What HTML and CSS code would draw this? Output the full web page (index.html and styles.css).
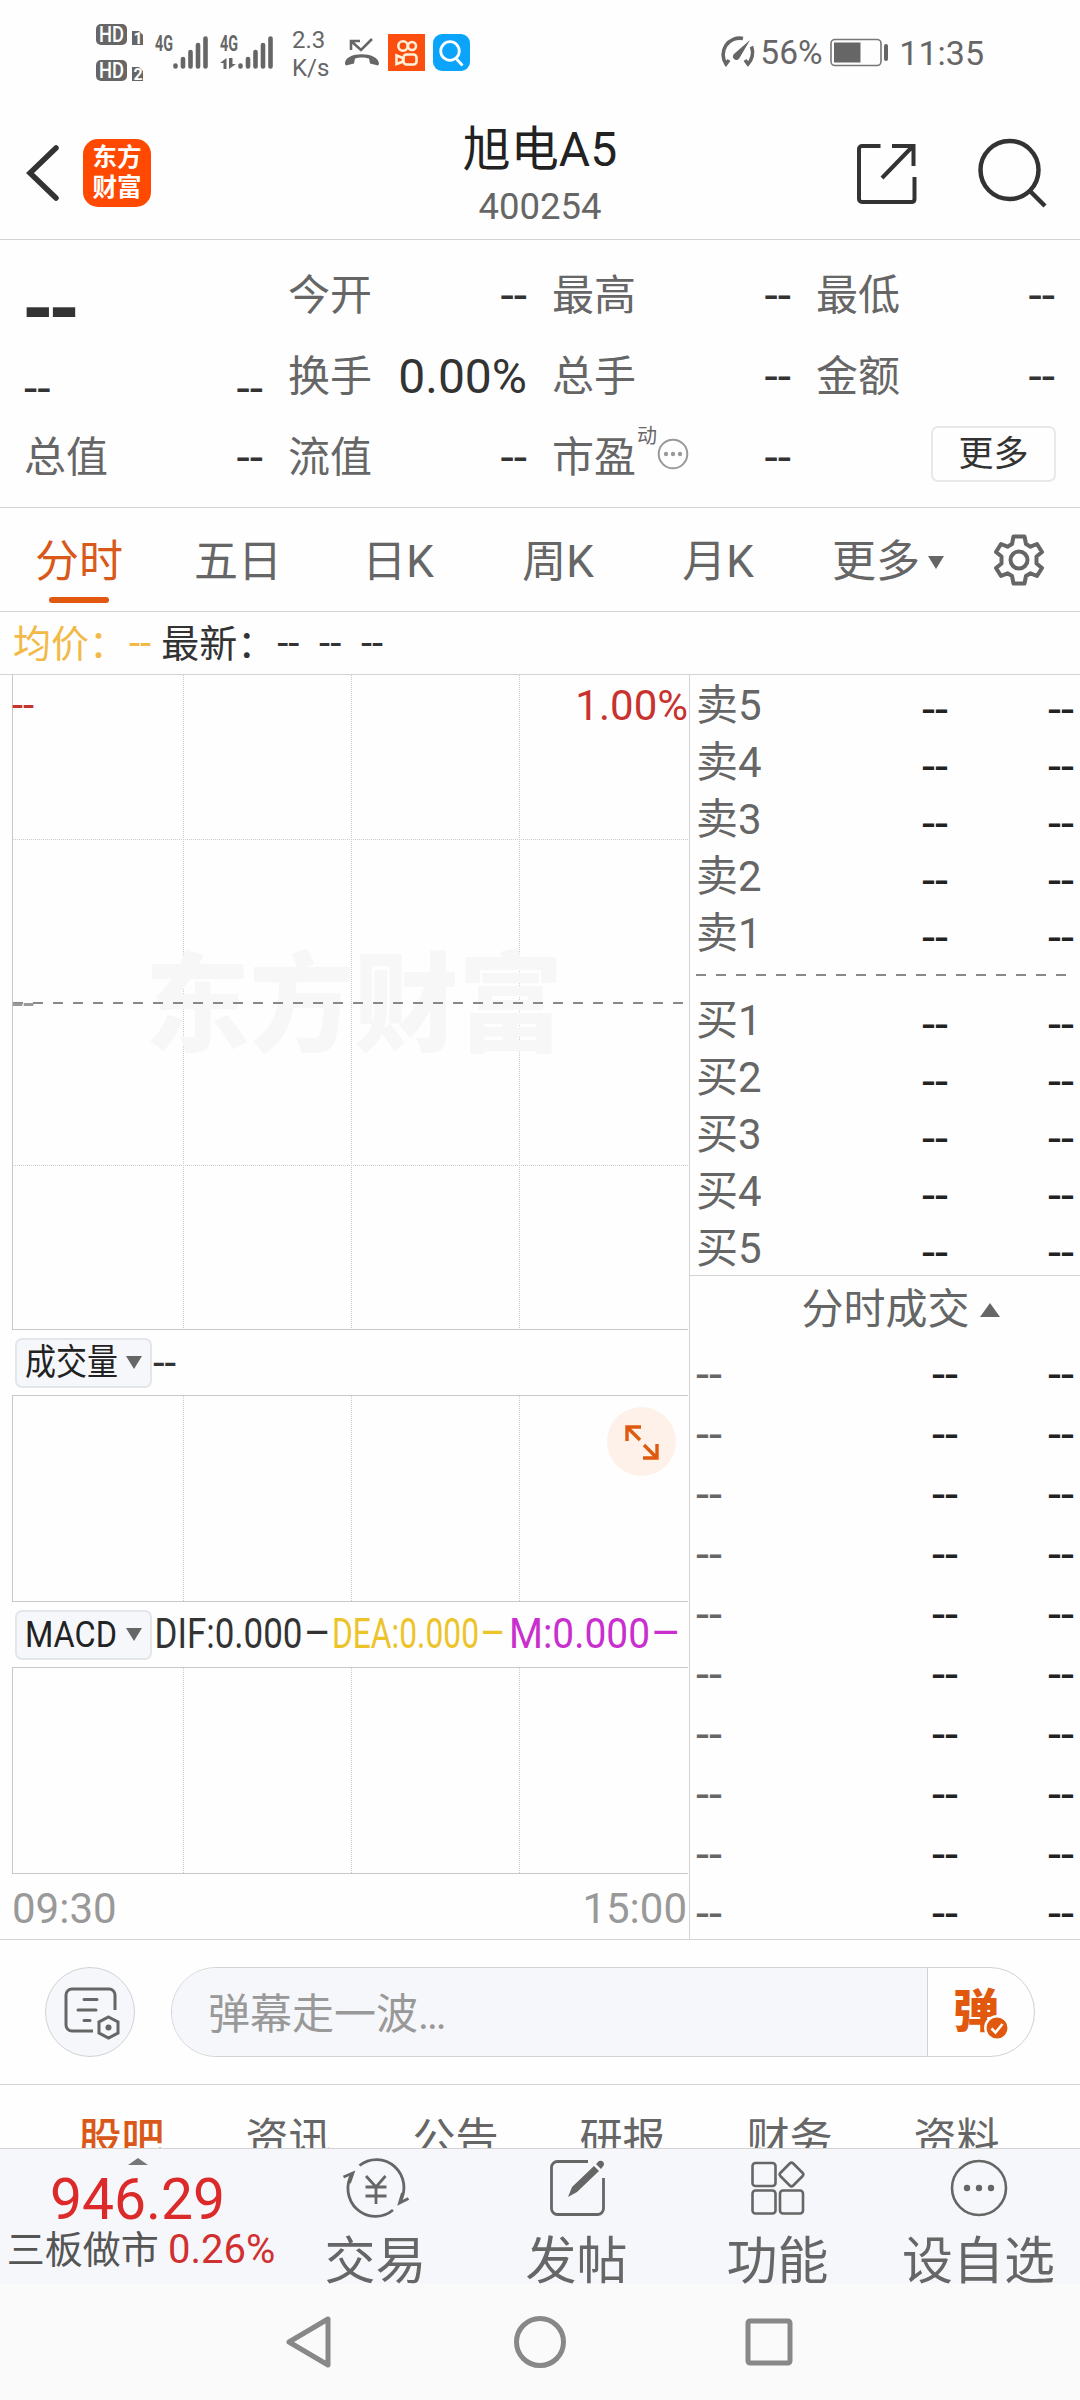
FILE: index.html
```html
<!DOCTYPE html>
<html lang="zh-CN">
  <head>
    <meta charset="utf-8">
    <title>旭电A5 400254</title>
    <link rel="stylesheet" href="styles.css">
  </head>

  <body>
    <div class="status-bar">
      <svg class="status-icons" width="190" height="62" viewBox="0 0 190 62">
        <g fill="#666">
          <rect x="0" y="2" width="31" height="21" rx="5"/>
          <rect x="0" y="38" width="31" height="21" rx="5"/>
          <path d="M36 9h7l4 4v10h-11zM36 45h7l4 4v10h-11z"/>
        </g>
        <g fill="#fff" class="hd-text">
          <text x="3" y="19.500" textLength="25" lengthAdjust="spacingAndGlyphs">HD</text>
          <text x="3" y="55.500" textLength="25" lengthAdjust="spacingAndGlyphs">HD</text>
          <text x="37.500" y="21.500" class="sim-text">1</text>
          <text x="37.500" y="57.500" class="sim-text">2</text>
        </g>
        <g fill="#666" class="net-text">
          <text x="59" y="29" textLength="18" lengthAdjust="spacingAndGlyphs">4G</text>
          <text x="124" y="29" textLength="18" lengthAdjust="spacingAndGlyphs">4G</text>
        </g>
        <g stroke="#666" stroke-width="4.6" stroke-linecap="round">
          <path d="M79.500 43.500v1M87 37v7.500M94.500 30v14.500M102 23v21.500M109.500 16.500v28"/>
          <path d="M144.500 43.500v1M152 37v7.500M159.500 30v14.500M167 23v21.500M174.500 16.500v28"/>
        </g>
        <path d="M130.500 36v11h-3v-6h-3.500zM133 36v11l7-5h-3.500v-6z" fill="#666"/>
      </svg>
      <div class="speed"><span>2.3</span><span>K/s</span></div>
      <svg class="missed-call" width="36" height="30" viewBox="0 0 36 30">
        <path d="M7 12V3h9M7 3l10 9L28 1" fill="none" stroke="#666" stroke-width="2.600"/>
        <path d="M1 26c-1-13 34-13 34 0l-1 1.500-8-2-1-5c-4-1.500-10-1.500-14 0l-1 5-8 2z" fill="#666"/>
      </svg>
      <svg class="kuai" width="37" height="37" viewBox="0 0 37 37">
        <rect width="37" height="37" fill="#fb4e0f"/>
        <g fill="none" stroke="#fff0d8" stroke-width="2.600">
          <circle cx="15" cy="12" r="4.700"/>
          <circle cx="24" cy="12" r="4"/>
          <rect x="15.500" y="20.500" width="13" height="10" rx="3"/>
          <path d="M15 24l-6.500-2.500v8.500l6.500-2.500z"/>
        </g>
      </svg>
      <svg class="qsearch" width="37" height="37" viewBox="0 0 37 37">
        <rect width="37" height="37" rx="9" fill="#0aa5fb"/>
        <circle cx="17" cy="17" r="9.300" fill="none" stroke="#fff" stroke-width="2.800"/>
        <path d="M23.500 25l6 6.500" stroke="#fff" stroke-width="2.800"/>
      </svg>
      <div class="status-right">
        <svg width="38" height="34" viewBox="0 0 38 34">
          <path d="M25 4.500A16.500 16.500 0 0 0 8 30l3-4M33.500 12.500C36 19 34 26 30 30l-3-4" fill="none" stroke="#666" stroke-width="3.600"/>
          <path d="M32 6L21.500 24a3.500 3.500 0 1 1-5-4.500z" fill="#666"/>
        </svg>
        <span class="percent">56%</span>
        <svg width="60" height="30" viewBox="0 0 60 30">
          <rect x="1" y="1.500" width="50" height="26" rx="4" fill="none" stroke="#777" stroke-width="1.600"/>
          <rect x="4" y="4.500" width="26.500" height="20" fill="#666"/>
          <rect x="54" y="6" width="4" height="17" rx="2" fill="#666"/>
        </svg>
        <span class="clock">11:35</span>
      </div>
    </div>

    <div class="header">
      <div class="header-left">
        <svg width="36" height="60" viewBox="0 0 36 60">
          <path d="M31 5L5 30l26 25" fill="none" stroke="#333" stroke-width="5.500" stroke-linecap="round"/>
        </svg>
        <div class="logo"><span>东方</span><span>财富</span></div>
      </div>
      <div class="header-title">
        <div class="stock-name">旭电A5</div>
        <div class="stock-code">400254</div>
      </div>
      <div class="header-right">
        <svg width="60" height="60" viewBox="0 0 60 60" fill="none" stroke="#333" stroke-width="4">
          <path d="M24.500 3H6a3 3 0 0 0-3 3v50a3 3 0 0 0 3 3h50a3 3 0 0 0 2.500-3V34M36 3h21.500v20M57 3L26 35"/>
        </svg>
        <svg class="search-icon" width="70" height="70" viewBox="0 0 70 70" fill="none" stroke="#333" stroke-width="4.500">
          <circle cx="31.500" cy="32" r="29"/>
          <path d="M52 53l15 15"/>
        </svg>
      </div>
    </div>

    <div class="quote">
      <div class="cell"><b class="price">--</b></div>
      <div class="cell"><span>今开</span><i>--</i></div>
      <div class="cell"><span>最高</span><i>--</i></div>
      <div class="cell"><span>最低</span><i>--</i></div>
      <div class="cell cell-change"><i>--</i><i>--</i></div>
      <div class="cell"><span>换手</span><i>0.00%</i></div>
      <div class="cell"><span>总手</span><i>--</i></div>
      <div class="cell"><span>金额</span><i>--</i></div>
      <div class="cell"><span>总值</span><i>--</i></div>
      <div class="cell"><span>流值</span><i>--</i></div>
      <div class="cell">
        <span>市盈</span><small>动</small>
        <svg class="tip" width="32" height="32" viewBox="0 0 32 32">
          <circle cx="16" cy="16" r="14.300" fill="none" stroke="#999" stroke-width="2"/>
          <g fill="#999"><circle cx="9" cy="16" r="2.200"/><circle cx="16" cy="16" r="2.200"/><circle cx="23" cy="16" r="2.200"/></g>
        </svg>
        <i>--</i>
      </div>
      <div class="cell"><button class="more-button">更多</button></div>
    </div>

    <div class="period-tabs">
      <div class="tab tab-active">分时</div>
      <div class="tab">五日</div>
      <div class="tab">日K</div>
      <div class="tab">周K</div>
      <div class="tab">月K</div>
      <div class="tab tab-more">更多<span class="arrow-down"></span></div>
      <svg width="52" height="52" viewBox="0 0 52 52" fill="none" stroke="#666" stroke-width="4" stroke-linejoin="round">
        <path d="M20.500 2.500h11l1.500 7.500 4.500 2.700 6.500-2.700 5 8-5.500 4.500v7l5.500 4.500-5 8-6.500-2.700-4.500 2.700-1.500 7.500h-11l-1.500-7.500-4.500-2.700-6.500 2.700-5-8 5.500-4.500v-7L3 18l5-8 6.500 2.700 4.500-2.700z"/>
        <circle cx="26" cy="26" r="8.500"/>
      </svg>
    </div>

    <div class="avg-line">
      <span class="avg">均价：<span class="num">--</span></span>
      <span class="latest">最新：<span class="num">--&nbsp; --&nbsp; --</span></span>
    </div>

    <div class="board">
      <div class="charts">
        <div class="chart chart-main">
          <svg width="676" height="654" viewBox="0 0 676 654">
            <g stroke="#ccc" stroke-width="1" stroke-dasharray="1 1">
              <path d="M170.500 0v654M338.500 0v654M506.500 0v654M0 164.500h676M0 490.500h676"/>
            </g>
            <text class="watermark" x="132" y="368" textLength="418" lengthAdjust="spacingAndGlyphs">东方财富</text>
            <path d="M0 328h674" stroke="#888" stroke-width="2" stroke-dasharray="10 10"/>
          </svg>
          <span class="label high-price">--</span>
          <span class="label high-rate">1.00%</span>
          <span class="label mid-price">--</span>
        </div>

        <div class="indicator">
          <div class="picker">
            <svg width="93" height="40"><text x="0" y="32" textLength="93" lengthAdjust="spacingAndGlyphs">成交量</text></svg>
            <span class="arrow-down"></span>
          </div>
          <span class="volume">--</span>
        </div>
        <div class="chart chart-sub">
          <svg width="676" height="205" viewBox="0 0 676 205">
            <path d="M170.500 0v205M338.500 0v205M506.500 0v205" stroke="#ccc" stroke-dasharray="1 1"/>
          </svg>
          <div class="expand">
            <svg width="36" height="36" viewBox="0 0 36 36" fill="none" stroke="#e0590f" stroke-width="3.400">
              <path d="M3 17V3h14M3 3l13 13M33 20v14H19M33 34L20 21"/>
            </svg>
          </div>
        </div>

        <div class="indicator">
          <div class="picker">
            <svg width="93" height="40"><text x="0" y="32" textLength="92" lengthAdjust="spacingAndGlyphs">MACD</text></svg>
            <span class="arrow-down"></span>
          </div>
          <svg class="macd" width="530" height="50">
            <text x="2.500" y="38" textLength="148" lengthAdjust="spacingAndGlyphs" fill="#333">DIF:0.000</text>
            <text x="153" y="38" textLength="24" lengthAdjust="spacingAndGlyphs" fill="#333">—</text>
            <text x="180" y="38" textLength="147" lengthAdjust="spacingAndGlyphs" fill="#ecc42a">DEA:0.000</text>
            <text x="329" y="38" textLength="23" lengthAdjust="spacingAndGlyphs" fill="#ecc42a">—</text>
            <text x="357" y="38" textLength="141" lengthAdjust="spacingAndGlyphs" fill="#c92fcd">M:0.000</text>
            <text x="500" y="38" textLength="27" lengthAdjust="spacingAndGlyphs" fill="#c92fcd">—</text>
          </svg>
        </div>
        <div class="chart chart-sub">
          <svg width="676" height="205" viewBox="0 0 676 205">
            <path d="M170.500 0v205M338.500 0v205M506.500 0v205" stroke="#ccc" stroke-dasharray="1 1"/>
          </svg>
        </div>
        <div class="times"><span>09:30</span><span>15:00</span></div>
      </div>

      <div class="depth">
        <div class="orders">
          <div class="order"><span>卖5</span><i>--</i><i>--</i></div>
          <div class="order"><span>卖4</span><i>--</i><i>--</i></div>
          <div class="order"><span>卖3</span><i>--</i><i>--</i></div>
          <div class="order"><span>卖2</span><i>--</i><i>--</i></div>
          <div class="order"><span>卖1</span><i>--</i><i>--</i></div>
          <svg class="order-split" width="372" height="30">
            <path d="M0 13h371" stroke="#888" stroke-width="2" stroke-dasharray="10 10"/>
          </svg>
          <div class="order"><span>买1</span><i>--</i><i>--</i></div>
          <div class="order"><span>买2</span><i>--</i><i>--</i></div>
          <div class="order"><span>买3</span><i>--</i><i>--</i></div>
          <div class="order"><span>买4</span><i>--</i><i>--</i></div>
          <div class="order"><span>买5</span><i>--</i><i>--</i></div>
        </div>
        <div class="deals-title">分时成交<span class="arrow-up"></span></div>
        <div class="deals">
          <div class="deal"><em>--</em><i>--</i><i>--</i></div>
          <div class="deal"><em>--</em><i>--</i><i>--</i></div>
          <div class="deal"><em>--</em><i>--</i><i>--</i></div>
          <div class="deal"><em>--</em><i>--</i><i>--</i></div>
          <div class="deal"><em>--</em><i>--</i><i>--</i></div>
          <div class="deal"><em>--</em><i>--</i><i>--</i></div>
          <div class="deal"><em>--</em><i>--</i><i>--</i></div>
          <div class="deal"><em>--</em><i>--</i><i>--</i></div>
          <div class="deal"><em>--</em><i>--</i><i>--</i></div>
          <div class="deal"><em>--</em><i>--</i><i>--</i></div>
        </div>
      </div>
    </div>

    <div class="danmu">
      <div class="danmu-setting">
        <svg width="56" height="54" viewBox="0 0 56 54" fill="none" stroke="#666" stroke-width="3" stroke-linecap="round">
          <path d="M51 23V8a6 6 0 0 0-6-6H8a6 6 0 0 0-6 6v30a6 6 0 0 0 6 6h21" stroke-linecap="butt"/>
          <path d="M20 12.500h13M14 23h18M20 33.500h6"/>
          <path d="M44.500 30l9.500 5v11l-9.500 5-9.500-5V35z"/>
          <circle cx="44.500" cy="40.500" r="3" fill="#666" stroke="none"/>
        </svg>
      </div>
      <div class="danmu-box">
        <div class="danmu-input">弹幕走一波<span class="dots">...</span></div>
        <div class="danmu-toggle">
          弹
          <svg class="check" width="26" height="26" viewBox="0 0 26 26">
            <circle cx="13" cy="13" r="11.700" fill="#e0590f" stroke="#fff" stroke-width="2.500"/>
            <path d="M7.500 13.500l4 4 7-8.500" fill="none" stroke="#fff" stroke-width="2.600"/>
          </svg>
        </div>
      </div>
    </div>

    <div class="news-tabs">
      <div class="news-active">股吧</div>
      <div>资讯</div>
      <div>公告</div>
      <div>研报</div>
      <div>财务</div>
      <div>资料</div>
    </div>

    <div class="bottom-bar">
      <div class="index">
        <span class="arrow-flat"></span>
        <div class="index-value">946.29</div>
        <div class="index-name">三板做市 <b>0.26%</b></div>
      </div>
      <div class="action">
        <svg width="66" height="60" viewBox="0 0 66 60" fill="none" stroke="#666" stroke-width="2.800">
          <path d="M16.500 7.500A27.500 28 0 0 1 57 44M50 52A27.500 28 0 0 1 9.500 15"/>
          <path d="M59.500 35l-3 10 9-4.500M6.500 25l3.500-10-9.500 4"/>
          <path d="M23 18l10 11 9.500-11M33 29v17M22.500 29h21M22.500 38h21"/>
        </svg>
        <span>交易</span>
      </div>
      <div class="action">
        <svg width="56" height="60" viewBox="0 0 56 60">
          <path d="M39 3.500H8.500a6 6 0 0 0-6 6v41a6 6 0 0 0 6 6h40a6 6 0 0 0 6-6V20" fill="none" stroke="#666" stroke-width="2.800"/>
          <path d="M19 39l4-10L45 8l5 5-22 21zM47 6l3-3q5-1 5 4l-3 4z" fill="#666"/>
        </svg>
        <span>发帖</span>
      </div>
      <div class="action">
        <svg width="56" height="60" viewBox="0 0 56 60" fill="none" stroke="#666" stroke-width="2.600">
          <rect x="2.500" y="5" width="23" height="23" rx="3"/>
          <rect x="2.500" y="32.500" width="23" height="23" rx="3"/>
          <rect x="30" y="32.500" width="23" height="23" rx="3"/>
          <rect x="32.500" y="7.500" width="18" height="18" rx="2.500" transform="rotate(45 41.500 16.500)"/>
        </svg>
        <span>功能</span>
      </div>
      <div class="action">
        <svg width="58" height="60" viewBox="0 0 58 60">
          <circle cx="29" cy="30" r="27" fill="none" stroke="#666" stroke-width="2.600"/>
          <g fill="#666"><circle cx="17" cy="30" r="3.200"/><circle cx="29" cy="30" r="3.200"/><circle cx="41" cy="30" r="3.200"/></g>
        </svg>
        <span>设自选</span>
      </div>
    </div>

    <div class="nav-bar">
      <svg width="510" height="56" viewBox="0 0 510 56" fill="none" stroke="#888" stroke-width="5" stroke-linejoin="round">
        <path d="M43 5v46L4 28z"/>
        <circle cx="255" cy="28" r="23.500"/>
        <rect x="463" y="7" width="42" height="42" rx="2"/>
      </svg>
    </div>
  </body>
</html>
```
FILE: styles.css
```css
* {
  box-sizing: border-box;
}

body {
  margin: 0;
  width: 1080px;
  height: 2400px;
  overflow: hidden;
  color: #666;
  background-color: #fefefe;
  font-family: Roboto, "Noto Sans CJK SC", sans-serif;
  font-size: 42px;
  line-height: 1;
}

svg {
  display: block;
  flex: none;
  overflow: visible;
}

i,
em {
  color: #333;
  font-style: normal;
}

/* status bar */
.status-bar {
  display: flex;
  height: 104px;
  padding: 22px 96px 0 96px;
}

.hd-text {
  font-size: 22px;
  font-weight: 500;
}

.hd-text .sim-text {
  font-size: 16px;
  font-weight: 700;
}

.net-text {
  font-size: 22px;
  font-weight: 700;
}

.speed {
  display: flex;
  flex-direction: column;
  width: 52px;
  margin-left: 6px;
  padding-top: 4px;
  font-size: 24px;
  line-height: 28px;
}

.missed-call {
  margin-top: 16px;
}

.kuai {
  margin: 12px 8px 0 8px;
}

.qsearch {
  margin-top: 12px;
}

.status-right {
  display: flex;
  align-items: center;
  height: 62px;
  margin-left: auto;
  font-size: 34px;
  white-space: nowrap;
}

.percent {
  width: 74px;
  padding-left: 4px;
  font-size: 33.5px;
}

.clock {
  padding-left: 9px;
}

.status-right svg:first-child {
  margin-top: -5px;
}

/* title */
.header {
  display: grid;
  grid-template-columns: 1fr auto 1fr;
  height: 136px;
  border-bottom: 1px solid #d4d4d4;
}

.header-left {
  display: flex;
  align-items: center;
  gap: 22px;
  padding: 2px 0 0 25px;
}

.logo {
  display: flex;
  flex-direction: column;
  justify-content: center;
  align-items: center;
  width: 68px;
  height: 68px;
  color: white;
  background-color: #ff4800;
  border-radius: 15px;
  font-size: 24.5px;
  font-weight: 700;
  line-height: 30px;
}

.header-title {
  text-align: center;
}

.stock-name {
  margin-top: 20px;
  color: #222;
  font-size: 48px;
  line-height: 52px;
}

.stock-code {
  margin-top: 11px;
  font-size: 36.5px;
  line-height: 40px;
}

.header-right {
  display: flex;
  justify-content: flex-end;
  align-items: center;
  gap: 62px;
  padding: 2px 32px 0 0;
}

/* quote table */
.quote {
  display: grid;
  grid-template-columns: repeat(4, 1fr);
  grid-auto-rows: 81px;
  column-gap: 25px;
  height: 268px;
  padding: 15px 25px 0 24px;
  border-bottom: 1px solid #d4d4d4;
}

.cell {
  display: flex;
  align-items: center;
}

.cell i {
  margin-left: auto;
  font-size: 48px;
}

.cell-change {
  padding-top: 24px;
}

.cell-change i:first-child {
  margin-left: 0;
}

.price {
  padding-top: 28px;
  margin-left: -3px;
  color: #333;
  font-size: 76px;
  font-weight: 900;
  letter-spacing: -8px;
}

.cell small {
  align-self: flex-start;
  margin: 9px 0 0 1px;
  font-size: 20px;
}

.tip {
  margin-top: -8px;
}

.more-button {
  width: 125px;
  height: 56px;
  margin: -7px -1px 0 auto;
  padding: 0;
  color: #333;
  background-color: #fefefe;
  border: 2px solid #e6e8ea;
  border-radius: 7px;
  font-family: inherit;
  font-size: 35px;
  line-height: 1;
}

/* period tabs */
.period-tabs {
  display: flex;
  align-items: center;
  height: 104px;
  border-bottom: 1px solid #d4d4d4;
  font-size: 44px;
}

.tab {
  display: flex;
  justify-content: center;
  align-items: center;
  width: 160px;
  height: 100%;
  padding-top: 5px;
}

.tab-active {
  flex-direction: column;
  width: 158px;
  color: #d9591a;
}

.tab-active::after {
  content: "";
  width: 60px;
  height: 6px;
  margin: 13px 0 -19px 0;
  background-color: #e0590f;
  border-radius: 3px;
}

.tab-more {
  width: 195px;
  padding-right: 15px;
}

.arrow-down {
  margin-left: 8px;
  border-top: 13px solid #666;
  border-left: 8px solid transparent;
  border-right: 8px solid transparent;
}

.avg-line {
  display: flex;
  align-items: center;
  gap: 10px;
  height: 63px;
  padding: 1px 0 0 13px;
  border-bottom: 1px solid #d4d4d4;
  font-size: 38px;
}

.num {
  padding-left: 2px;
  font-size: 40px;
}

.avg {
  color: #f2b947;
}

.latest {
  color: #333;
}

/* charts and order depth */
.board {
  display: flex;
  height: 1265px;
  border-bottom: 1px solid #d4d4d4;
}

.charts {
  width: 690px;
  padding-left: 12px;
  border-right: 1px solid #d4d4d4;
}

.chart {
  position: relative;
  width: 676px;
  border-left: 1px solid #c8c8c8;
  border-bottom: 1px solid #c8c8c8;
}

.chart-main {
  height: 655px;
}

.chart-sub {
  height: 207px;
  border-top: 1px solid #c8c8c8;
}

.watermark {
  fill: #f7f7f7;
  font-size: 108px;
  font-weight: 900;
}

/* axis labels sit on top of the plot */
.label {
  position: absolute;
  line-height: 42px;
}

.high-price {
  top: 10px;
  left: -1px;
  color: #c8332f;
  font-size: 40px;
}

.high-rate {
  top: 10px;
  right: 0;
  color: #c8332f;
}

.mid-price {
  top: 308px;
  left: -1px;
  color: #999;
  font-size: 40px;
}

.indicator {
  display: flex;
  align-items: center;
  height: 65px;
}

.picker {
  display: flex;
  align-items: center;
  width: 137px;
  height: 50px;
  margin-left: 3px;
  padding-left: 8px;
  background-color: #f6f7fa;
  border: 2px solid #e3e6ea;
  border-radius: 7px;
  font-size: 36px;
  fill: #222;
}

.volume {
  padding-left: 1px;
  color: #333;
}

.expand {
  display: flex;
  justify-content: center;
  align-items: center;
  position: absolute;
  top: 11px;
  right: 12px;
  width: 69px;
  height: 69px;
  background-color: #fef1e9;
  border-radius: 50%;
}

.times {
  display: flex;
  justify-content: space-between;
  padding: 14px 2px 0 0;
  color: #999;
}

.depth {
  flex: 1;
}

.orders {
  height: 601px;
  padding: 2px 6px 0 6px;
  border-bottom: 1px solid #d4d4d4;
}

.order,
.deal {
  display: grid;
  grid-template-columns: 126px 1fr 126px;
  align-items: center;
  height: 57px;
  text-align: right;
}

.order span {
  text-align: left;
}

.order i,
.deal i,
.deal em {
  padding-top: 6px;
  color: #222;
  font-size: 47px;
}

.deals-title {
  display: flex;
  justify-content: center;
  align-items: center;
  height: 65px;
  padding: 2px 0 0 31px;
}

.arrow-up {
  margin-left: 10px;
  border-bottom: 14px solid #666;
  border-left: 10.5px solid transparent;
  border-right: 10.5px solid transparent;
}

.deals {
  padding: 0 6px 0 6px;
}

.deal {
  grid-template-columns: 126px 1fr 116px;
  height: 59.9px;
}

.deal em {
  color: #666;
  text-align: left;
}

/* bullet comments */
.danmu {
  display: flex;
  align-items: center;
  gap: 36px;
  height: 145px;
  padding: 0 45px 0 45px;
  border-bottom: 1px solid #d4d4d4;
}

.danmu-setting {
  display: flex;
  justify-content: center;
  align-items: center;
  width: 90px;
  height: 90px;
  padding: 4px 0 0 3px;
  background-color: #f6f7fa;
  border: 1px solid #d0d2d6;
  border-radius: 50%;
}

.danmu-box {
  display: flex;
  flex: 1;
  height: 90px;
  border: 1px solid #d0d2d6;
  border-radius: 45px;
  overflow: hidden;
}

.danmu-input {
  display: flex;
  flex: 1;
  align-items: center;
  padding: 5px 0 0 36px;
  color: #999;
  background-color: #f6f7fa;
}

.dots {
  letter-spacing: -2.200px;
}

.danmu-toggle {
  position: relative;
  width: 107px;
  padding: 20px 0 0 25px;
  color: #e0590f;
  border-left: 1px solid #d0d2d6;
  font-size: 46px;
  font-weight: 900;
}

.check {
  position: absolute;
  top: 47px;
  left: 56px;
}

.news-tabs {
  display: grid;
  grid-template-columns: repeat(6, 167px);
  height: 63px;
  padding: 33px 38px 0 38px;
  overflow: hidden;
  text-align: center;
  font-size: 43px;
}

.news-active {
  color: #d9591a;
  font-weight: 500;
}

.bottom-bar {
  display: flex;
  height: 136px;
  overflow: hidden;
  background-color: #f6f7fa;
  border-top: 1px solid #d4d4d4;
}

.index {
  display: flex;
  flex-direction: column;
  align-items: center;
  width: 275px;
  padding-top: 9px;
}

.arrow-flat {
  border-bottom: 7px solid #777;
  border-left: 10.5px solid transparent;
  border-right: 10.5px solid transparent;
}

.index-value {
  margin-top: 5px;
  color: #dc2a2a;
  font-size: 57px;
  line-height: 60px;
}

.index-name {
  padding-left: 7px;
  color: #555;
  font-size: 38px;
  line-height: 40px;
  white-space: nowrap;
}

.index-name b {
  color: #d03030;
  font-size: 40px;
  font-weight: 400;
}

.action {
  display: flex;
  flex-direction: column;
  align-items: center;
  width: 201px;
  padding-top: 9px;
  font-size: 51px;
}

.action span {
  margin-top: 18px;
}

.nav-bar {
  display: flex;
  justify-content: center;
  height: 116px;
  padding-top: 30px;
  background-color: #fafafa;
}
```
